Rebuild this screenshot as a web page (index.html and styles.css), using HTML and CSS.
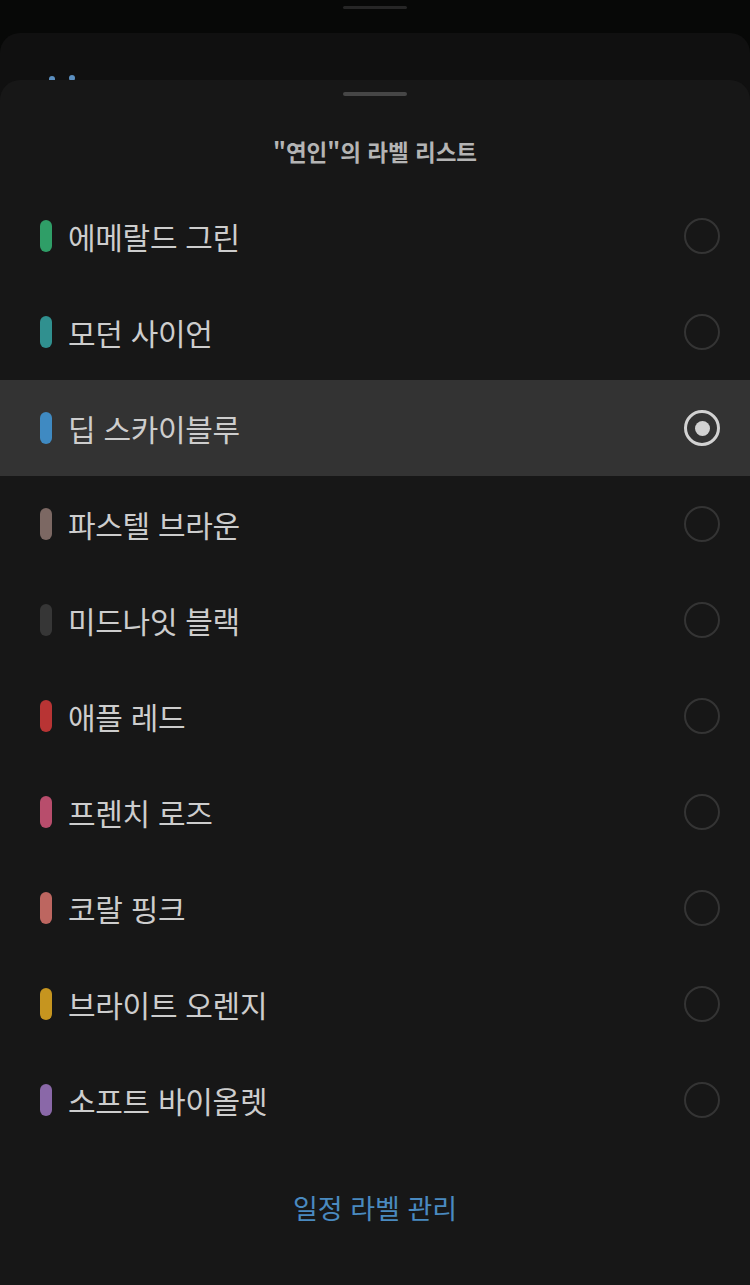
FILE: index.html
```html
<!DOCTYPE html>
<html lang="ko">
<head>
<meta charset="utf-8">
<link rel="stylesheet" href="styles.css">
</head>
<body>
<div class="screen">
  <div class="top-handle"></div>
  <div class="back-sheet">
    <div class="peek">
      <svg width="60" height="7" viewBox="0 0 60 7"><ellipse cx="20" cy="6" rx="3" ry="3" fill="#5b8fc0"/><ellipse cx="40" cy="5" rx="3" ry="3" fill="#5b8fc0"/></svg>
    </div>
    <div class="sheet">
      <div class="handle"></div>
      <h1 class="title">"연인"의 라벨 리스트</h1>
      <ul class="list">
        <li class="row"><span class="bar" style="background:#2f9e67"></span><span class="label">에메랄드 그린</span><span class="radio"></span></li>
        <li class="row"><span class="bar" style="background:#30908f"></span><span class="label">모던 사이언</span><span class="radio"></span></li>
        <li class="row selected"><span class="bar" style="background:#3f8ac2"></span><span class="label">딥 스카이블루</span><span class="radio on"></span></li>
        <li class="row"><span class="bar" style="background:#7c6863"></span><span class="label">파스텔 브라운</span><span class="radio"></span></li>
        <li class="row"><span class="bar" style="background:#363636"></span><span class="label">미드나잇 블랙</span><span class="radio"></span></li>
        <li class="row"><span class="bar" style="background:#b83434"></span><span class="label">애플 레드</span><span class="radio"></span></li>
        <li class="row"><span class="bar" style="background:#b84d6c"></span><span class="label">프렌치 로즈</span><span class="radio"></span></li>
        <li class="row"><span class="bar" style="background:#bd6660"></span><span class="label">코랄 핑크</span><span class="radio"></span></li>
        <li class="row"><span class="bar" style="background:#c6951f"></span><span class="label">브라이트 오렌지</span><span class="radio"></span></li>
        <li class="row"><span class="bar" style="background:#8a68a8"></span><span class="label">소프트 바이올렛</span><span class="radio"></span></li>
      </ul>
      <div class="footer">일정 라벨 관리</div>
    </div>
  </div>
</div>
</body>
</html>
```
FILE: styles.css
```css
* { box-sizing: border-box; }
html, body { margin: 0; padding: 0; }
body {
  background: #070807;
  font-family: "Noto Sans CJK KR", "Noto Sans", sans-serif;
}
.screen {
  width: 750px;
  height: 1285px;
  display: flex;
  flex-direction: column;
  overflow: hidden;
  background: #070807;
}
.top-handle {
  width: 64px;
  height: 3px;
  border-radius: 2px;
  background: #262626;
  margin: 6px auto 24px;
  flex: none;
}
.back-sheet {
  flex: 1;
  display: flex;
  flex-direction: column;
  background: #101010;
  border-radius: 20px 20px 0 0;
  padding-top: 40px;
}
.peek {
  height: 7px;
  padding-left: 32px;
  line-height: 0;
}
.sheet {
  flex: 1;
  display: flex;
  flex-direction: column;
  background: #171717;
  border-radius: 20px 20px 0 0;
}
.handle {
  width: 64px;
  height: 4px;
  border-radius: 2px;
  background: #464646;
  margin: 12px auto 0;
}
.title {
  margin: 40px 0 22px;
  height: 30px;
  line-height: 30px;
  text-align: center;
  font-size: 22.5px;
  font-weight: 700;
  color: #b4b4b4;
}
.list {
  list-style: none;
  margin: 0;
  padding: 0;
}
.row {
  height: 96px;
  display: flex;
  align-items: center;
  padding: 0 30px 0 40px;
}
.row.selected { background: #333333; }
.bar {
  width: 12px;
  height: 32px;
  border-radius: 6px;
  flex: none;
}
.label {
  flex: 1;
  margin-left: 16px;
  font-size: 30px;
  color: #cdcdcd;
  letter-spacing: -0.3px;
  line-height: 40px;
}
.radio {
  width: 36px;
  height: 36px;
  border-radius: 50%;
  border: 2.5px solid #343434;
  flex: none;
  display: flex;
  align-items: center;
  justify-content: center;
}
.radio.on { border: 3px solid #d2d2d2; }
.radio.on::after {
  content: "";
  width: 15px;
  height: 15px;
  border-radius: 50%;
  background: #d2d2d2;
}
.footer {
  margin-top: 45px;
  height: 30px;
  line-height: 30px;
  text-align: center;
  font-size: 27px;
  color: #4a8ac0;
}
```
